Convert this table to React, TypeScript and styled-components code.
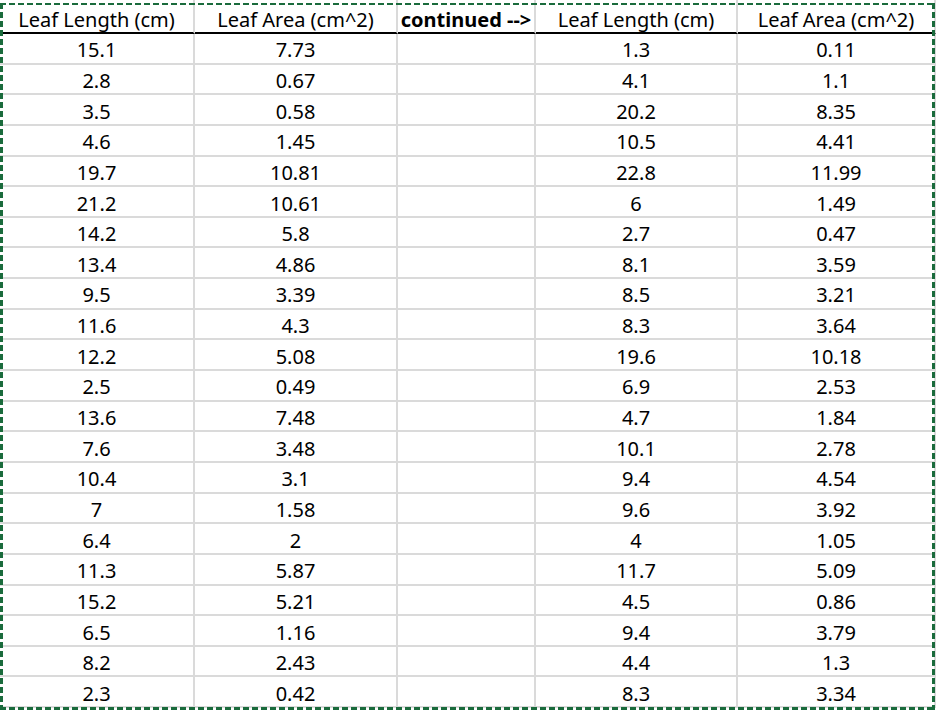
import styled, { createGlobalStyle } from 'styled-components'

const GlobalStyle = createGlobalStyle`
  html, body {
    margin: 0;
    padding: 0;
    background: #ffffff;
  }
  body {
    font-family: "Noto Sans", "Open Sans", "Liberation Sans", sans-serif;
    color: #000000;
  }
`

const COLUMNS = '195px 203px 138px 202px 198px'

const Sheet = styled.div`
  position: relative;
  width: 936px;
  height: 711px;
  overflow: hidden;
`

const Row = styled.div<{ $height: number }>`
  display: grid;
  grid-template-columns: ${COLUMNS};
  height: ${(p) => p.$height}px;
`

const Cell = styled.div<{ $header?: boolean; $bold?: boolean; $edge?: boolean }>`
  box-sizing: border-box;
  display: flex;
  align-items: center;
  justify-content: center;
  padding-top: ${(p) => (p.$header ? 2 : 3)}px;
  border-right: 2px solid #dadada;
  border-bottom: 2px solid ${(p) => (p.$header ? '#000000' : p.$edge ? 'transparent' : '#dadada')};
  font-size: 20px;
  font-weight: ${(p) => (p.$bold ? 700 : 400)};
  white-space: nowrap;
  overflow: hidden;
`

// green dashed copy marquee around the selected range
const Marquee = styled.div`
  position: absolute;
  top: 3px;
  left: 0;
  right: 1px;
  bottom: 1px;
  pointer-events: none;
  background:
    repeating-linear-gradient(90deg, #1a6b3c 0 6px, transparent 6px 9px) top left / 100% 2px no-repeat,
    repeating-linear-gradient(90deg, #1a6b3c 0 6px, transparent 6px 9px) bottom left / 100% 3px no-repeat,
    repeating-linear-gradient(180deg, #1a6b3c 0 6px, transparent 6px 9px) top left / 3px 100% no-repeat,
    repeating-linear-gradient(180deg, #1a6b3c 0 6px, transparent 6px 9px) top right / 3px 100% no-repeat;
`

const HEADERS = ['Leaf Length (cm)', 'Leaf Area (cm^2)', 'continued -->', 'Leaf Length (cm)', 'Leaf Area (cm^2)']

const LEFT: [string, string][] = [
  ['15.1', '7.73'],
  ['2.8', '0.67'],
  ['3.5', '0.58'],
  ['4.6', '1.45'],
  ['19.7', '10.81'],
  ['21.2', '10.61'],
  ['14.2', '5.8'],
  ['13.4', '4.86'],
  ['9.5', '3.39'],
  ['11.6', '4.3'],
  ['12.2', '5.08'],
  ['2.5', '0.49'],
  ['13.6', '7.48'],
  ['7.6', '3.48'],
  ['10.4', '3.1'],
  ['7', '1.58'],
  ['6.4', '2'],
  ['11.3', '5.87'],
  ['15.2', '5.21'],
  ['6.5', '1.16'],
  ['8.2', '2.43'],
  ['2.3', '0.42'],
]

const RIGHT: [string, string][] = [
  ['1.3', '0.11'],
  ['4.1', '1.1'],
  ['20.2', '8.35'],
  ['10.5', '4.41'],
  ['22.8', '11.99'],
  ['6', '1.49'],
  ['2.7', '0.47'],
  ['8.1', '3.59'],
  ['8.5', '3.21'],
  ['8.3', '3.64'],
  ['19.6', '10.18'],
  ['6.9', '2.53'],
  ['4.7', '1.84'],
  ['10.1', '2.78'],
  ['9.4', '4.54'],
  ['9.6', '3.92'],
  ['4', '1.05'],
  ['11.7', '5.09'],
  ['4.5', '0.86'],
  ['9.4', '3.79'],
  ['4.4', '1.3'],
  ['8.3', '3.34'],
]

function App() {
  return (
    <>
      <GlobalStyle />
      <Sheet>
        <Row $height={4}>
          {HEADERS.map((h) => (
            <Cell key={h + 'top'} $edge />
          ))}
        </Row>
        <Row $height={30}>
          {HEADERS.map((h, i) => (
            <Cell key={i} $header $bold={i === 2}>
              {h}
            </Cell>
          ))}
        </Row>
        {LEFT.map(([len, area], i) => (
          <Row key={i} $height={30.65}>
            <Cell>{len}</Cell>
            <Cell>{area}</Cell>
            <Cell />
            <Cell>{RIGHT[i][0]}</Cell>
            <Cell>{RIGHT[i][1]}</Cell>
          </Row>
        ))}
        <Marquee />
      </Sheet>
    </>
  )
}

export default App
